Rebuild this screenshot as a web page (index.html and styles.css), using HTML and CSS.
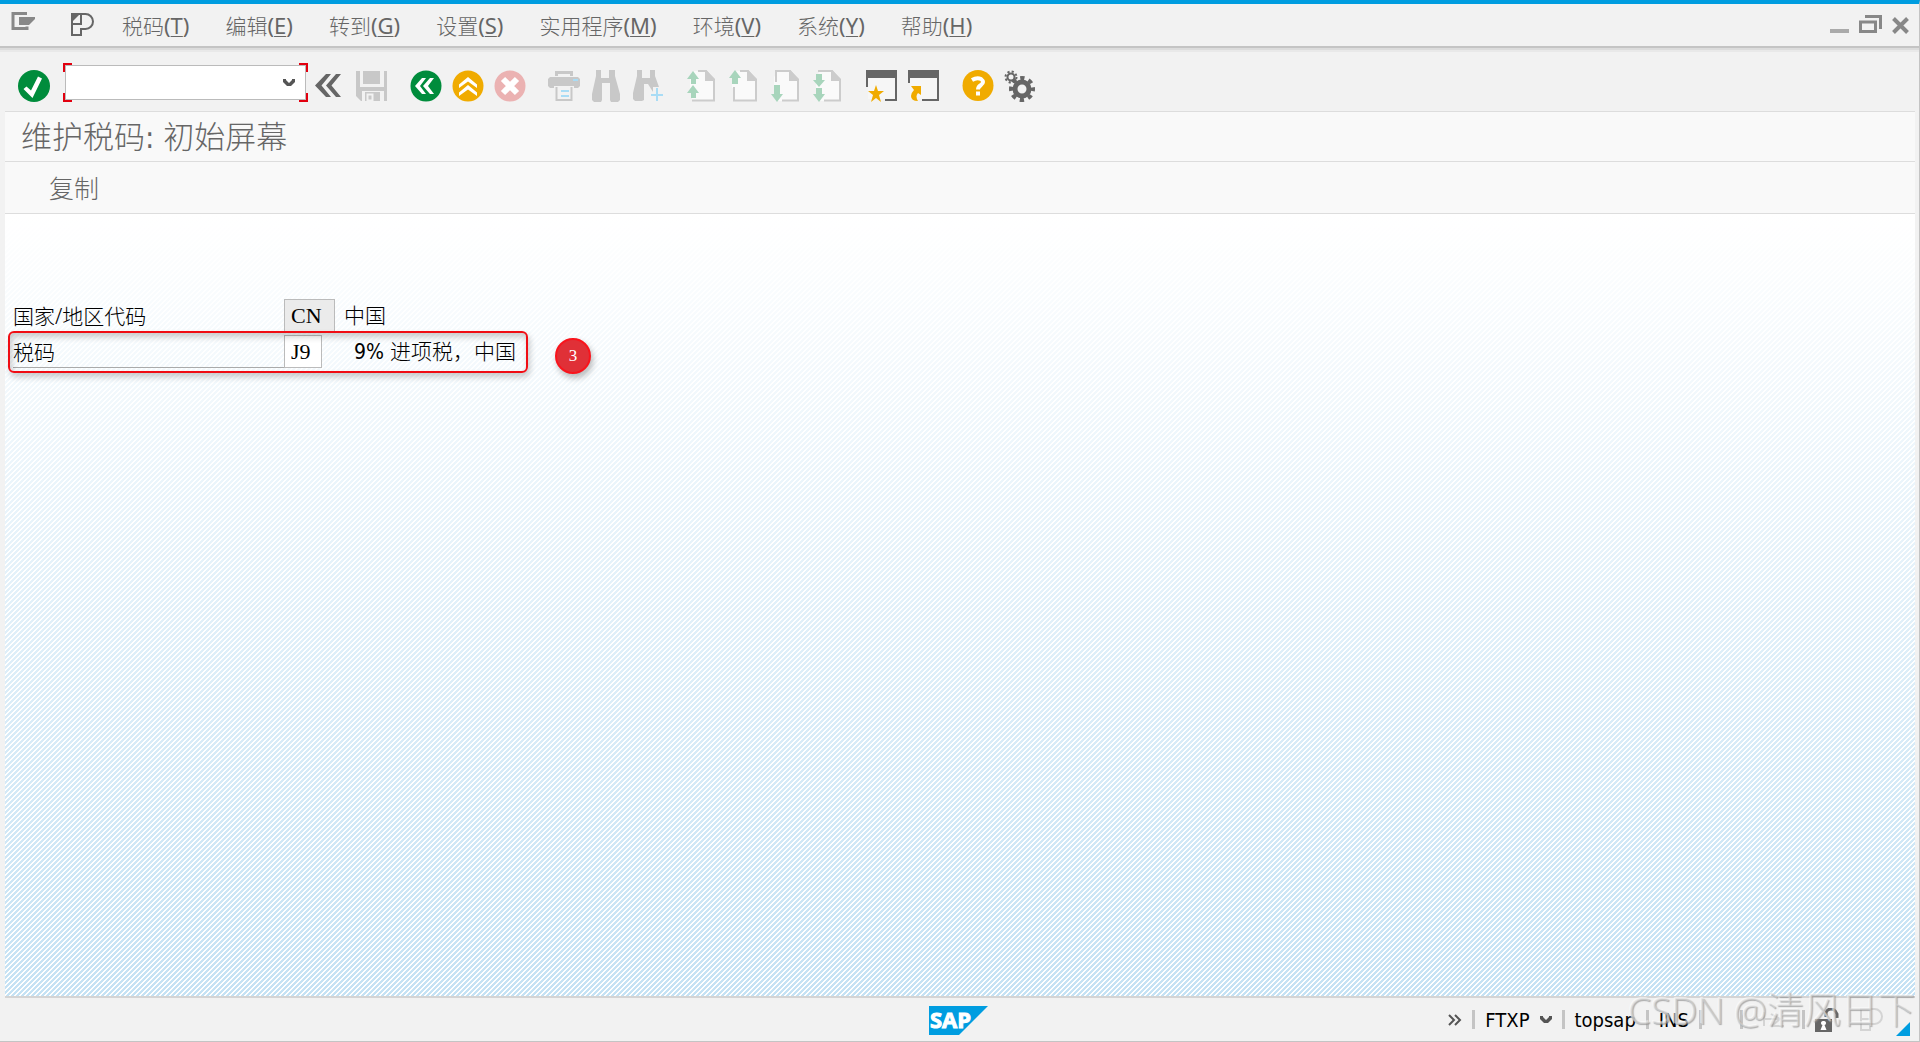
FILE: index.html
```html
<!DOCTYPE html>
<html lang="zh-CN">
<head>
<meta charset="utf-8">
<title>维护税码: 初始屏幕</title>
<link rel="stylesheet" href="styles.css">
</head>
<body>
<svg class="defs" aria-hidden="true">
  <symbol id="chevron" viewBox="0 0 12 8"><path d="M0 0h3v1l3 3 3-3V0h3v3L8 7H4L0 3z" fill="currentColor"/></symbol>
  <symbol id="page" viewBox="0 0 32 32"><path d="M8 1h12l9 9v21H6V18H4V7z" fill="#fafafa"/><path d="M19 0h1l9 9v2H19z" fill="#ccc"/></symbol>
</svg>
<div class="window">
  <header class="menubar">
    <button class="plain" aria-label="窗口菜单"><svg width="24" height="18"><path d="M16 1.5H2v15h14v-2M2 1v16" fill="none" stroke="#888" stroke-width="3"/><path d="M8 5h16v2l-6 6H8z" fill="#888"/></svg></button>
    <button class="plain brand" aria-label="P"><svg width="24" height="24"><path d="M1 1h13.500a7.500 7.500 0 0 1 0 15H10v6H1zM1 11h9V1" fill="none" stroke="#666" stroke-width="2"/><path d="M1 1h7v1L2 8H1z" fill="#666"/></svg></button>
    <nav class="menu">
      <button>税码<span>(<u>T</u>)</span></button><button>编辑<span>(<u>E</u>)</span></button><button>转到<span>(<u>G</u>)</span></button><button>设置<span>(<u>S</u>)</span></button><button>实用程序<span>(<u>M</u>)</span></button><button>环境<span>(<u>V</u>)</span></button><button>系统<span>(<u>Y</u>)</span></button><button>帮助<span>(<u>H</u>)</span></button>
    </nav>
    <div class="controls">
      <button class="plain" aria-label="最小化"><svg width="20" height="20"><path d="M0 14h19v4H0z" fill="#aaa"/></svg></button>
      <button class="plain" aria-label="还原"><svg width="24" height="20"><path d="M6 1.500h15.500V14M1.500 7h15v9.500h-15z" fill="none" stroke="#888" stroke-width="3"/></svg></button>
      <button class="plain" aria-label="关闭"><svg width="17" height="20"><path d="M1.500 3.500l14 14M15.500 3.500l-14 14" stroke="#888" stroke-width="4"/></svg></button>
    </div>
  </header>
  <div class="toolbar">
    <button class="plain" aria-label="确认"><svg width="32" height="32"><circle cx="16" cy="16" r="16" fill="#008c3c"/><path d="M5.500 19l3-2.500 4.500 4L20 6.500l4 2L14.500 28z" fill="#fff"/></svg></button>
    <div class="command">
      <input type="text" aria-label="命令">
      <button class="plain drop" aria-label="历史记录"><svg width="12" height="8"><use href="#chevron"/></svg></button>
      <svg class="corners" width="245" height="39"><path d="M1 9V1h8M236 1h8v8M1 30v8h8M236 38h8v-8" fill="none" stroke="#e2000f" stroke-width="2"/></svg>
    </div>
    <button class="plain collapse" aria-label="收起"><svg width="26" height="32"><path d="M11 4h5L6.500 15.500 16 27h-5L0 15.500zM21 4h5l-9.500 11.500L26 27h-5L11 15.500z" fill="#666"/></svg></button>
    <button class="plain save" aria-label="保存"><svg width="32" height="32"><path d="M0 1h4v16h24V1h3v30H28V21H6v10h-1L0 26z" fill="#c8c8c8"/><path d="M7 1h17v13H7zM9 22h15v9H9z" fill="#c8c8c8"/><path d="M11.500 24.500h5v6h-5z" fill="none" stroke="#f2f2f2" stroke-width="2"/></svg></button>
    <div class="tools">
      <div class="group">
        <button class="plain" aria-label="返回"><svg width="32" height="32"><circle cx="16" cy="16" r="15.500" fill="#008c3c"/><path d="M12 8h4l-6 8 6 8h-4L5 16zM20 8h4l-6 8 6 8h-4l-7-8z" fill="#fff"/></svg></button>
        <button class="plain" aria-label="退出"><svg width="32" height="32"><circle cx="16" cy="16" r="15.500" fill="#f0ab00"/><path d="M7 14.500L16 7l9 7.500v3.500l-9-6.500L7 18zM7 22.500l9-7.500 9 7.500V26l-9-6.500L7 26z" fill="#fff"/></svg></button>
        <button class="plain" aria-label="取消"><svg width="32" height="32"><circle cx="16" cy="16" r="15.500" fill="#ebb2b2"/><path d="M9 9l14 14M23 9L9 23" stroke="#fff" stroke-width="6"/></svg></button>
      </div>
      <div class="group">
        <button class="plain" aria-label="打印"><svg width="32" height="32"><path d="M7 1h18v5h-3V4H10v2H7zM2 7h28l2 2v7l-2 2h-4v-2H6v2H2l-2-2V9z" fill="#c8c8c8"/><path d="M8.500 17v13h15V17" fill="none" stroke="#c8c8c8" stroke-width="2"/><path d="M25 9h5v2h-5zM13 20h8v2h-8zM13 25h8v2h-8z" fill="#a9dcf5"/></svg></button>
        <button class="plain" aria-label="查找"><svg width="32" height="32"><path d="M6 0h5v8h8V0h6v6l5 18v6l-2 2h-7l-1-2V13h-8v17l-1 2H4l-2-2v-6L6 6z" fill="#c8c8c8"/></svg></button>
        <button class="plain" aria-label="查找下一个"><svg width="32" height="32"><path d="M5 0h5v8h8V0h5v6l4 11h-6v5l-5-8h-4v16l-2 1H3l-2-2v-6L5 6z" fill="#c8c8c8"/><path d="M25 18v13M19 25h12" stroke="#a9dcf5" stroke-width="2"/></svg></button>
      </div>
      <div class="group">
        <button class="plain" aria-label="首页"><svg width="32" height="32"><use href="#page"/><path d="M12 1h8l8 9v20.500H6" fill="none" stroke="#ccc" stroke-width="2"/><path d="M7 1l6 8h-3v5H5V9H1zM7 15l6 8h-3v5H5v-5H1z" fill="#a8d5bc"/></svg></button>
        <button class="plain" aria-label="上一页"><svg width="32" height="32"><use href="#page"/><path d="M12 1h8l8 9v20.500H6V17" fill="none" stroke="#ccc" stroke-width="2"/><path d="M7 0l6 8h-3v6H4V8H1z" fill="#a8d5bc"/></svg></button>
        <button class="plain" aria-label="下一页"><svg width="32" height="32"><use href="#page"/><path d="M6 12V1h14l8 9v20.500H12" fill="none" stroke="#ccc" stroke-width="2"/><path d="M7 32l6-8h-3v-9H4v9H1z" fill="#a8d5bc"/></svg></button>
        <button class="plain" aria-label="末页"><svg width="32" height="32"><use href="#page"/><path d="M6 1h14l8 9v20.500H12" fill="none" stroke="#ccc" stroke-width="2"/><path d="M7 17l6-7h-3V4H4v6H1zM7 32l6-8h-3v-6H4v6H1z" fill="#a8d5bc"/></svg></button>
      </div>
      <div class="group">
        <button class="plain" aria-label="创建新会话"><svg width="32" height="32"><path d="M0 0h31v31H19v-2h10V8H2v9H0z" fill="#666"/><path d="M2 8h27v21H2z" fill="#f6f6f6"/><path d="M10 15l2 6h6l-5 4 2 7-5-4-5 4 2-7-5-4h6z" fill="#f0ab00"/></svg></button>
        <button class="plain" aria-label="生成快捷方式"><svg width="32" height="32"><path d="M0 0h31v31H14v-2h15V8H2v5H0z" fill="#666"/><path d="M2 8h27v21H2z" fill="#f6f6f6"/><path d="M3 16h10v9l-3-2q-3 3 0 8Q3 31 3 26q0-3 3-6z" fill="#f0ab00"/></svg></button>
      </div>
      <div class="group">
        <button class="plain" aria-label="帮助"><svg width="32" height="32"><circle cx="16" cy="15.500" r="15.500" fill="#f0ab00"/><path d="M10 10q5-3 9-1 4 3 0 6-3 2-3 4.500M16 21.500v4" fill="none" stroke="#fff" stroke-width="4"/></svg></button>
        <button class="plain" aria-label="定制本地布局"><svg width="32" height="32" fill="none" stroke="#666"><circle cx="18" cy="19" r="7" stroke-width="5"/><circle cx="18" cy="19" r="11" stroke-width="4" stroke-dasharray="4.320 4.320" stroke-dashoffset="2.160"/><circle cx="7" cy="7" r="3.500" stroke-width="2"/><circle cx="7" cy="7" r="5.500" stroke-width="2" stroke-dasharray="2.160 2.160"/></svg></button>
      </div>
    </div>
  </div>
  <h1 class="title">维护税码<span>: </span>初始屏幕</h1>
  <div class="actions"><button>复制</button></div>
  <main class="canvas">
    <form class="fields">
      <div class="row">
        <label for="country">国家/地区代码</label>
        <input id="country" class="country" value="CN" readonly>
        <span class="desc">中国</span>
      </div>
      <div class="row">
        <label class="ruled" for="tax">税码</label>
        <input id="tax" class="tax" value="J9">
        <span class="desc rate">9% 进项税，中国</span>
      </div>
      <div class="highlight"></div>
      <div class="step">3</div>
    </form>
  </main>
  <footer class="status">
    <svg class="logo" width="59" height="29" viewBox="0 0 59 29" role="img" aria-label="SAP"><path d="M0 0h59L30 29H0z" fill="#009de0"/><text x="1" y="22" class="logotext">SAP</text></svg>
    <div class="info">
      <svg width="14" height="12"><path d="M1 1l5 5-5 5M7 1l5 5-5 5" fill="none" stroke="#555" stroke-width="2"/></svg>
      <i class="sep"></i>
      <span>FTXP</span>
      <svg class="more" width="12" height="8"><use href="#chevron"/></svg>
      <i class="sep more-gap"></i><span>topsap</span><i class="sep"></i><span>INS</span><i class="sep"></i>
      <i class="sep wide"></i>
      <svg class="pen" width="22" height="20"><path d="M1 2v14M1 9h16M8 4l9 5-8 7M9 16h12" fill="none" stroke="#d4d4d4" stroke-width="2"/></svg>
      <i class="sep far"></i>
      <svg width="24" height="24"><path d="M0 11h17v13H0z" fill="#666"/><path d="M11 9V5q1-4 5-4t6 5v4" fill="none" stroke="#666" stroke-width="3"/><path d="M8.500 13a2 2 0 0 1 1 4l2 5h-6l2-5a2 2 0 0 1 1-4" fill="#fff"/></svg>
      <svg class="ghost" width="24" height="24"><path d="M1 1h13.500a7.500 7.500 0 0 1 0 15H10v6H1zM1 11h9V1" fill="none" stroke="#d4d4d4" stroke-width="2"/></svg>
    </div>
    <div class="watermark">CSDN @清风日下</div>
    <svg class="grip" width="14" height="14"><path d="M14 0v14H0z" fill="#009de0"/></svg>
  </footer>
</div>
</body>
</html>
```
FILE: styles.css
```css
* { box-sizing: border-box; }
body { margin: 0; font-family: "Noto Sans", "Noto Sans CJK SC", sans-serif; font-size: 20px; color: #666; }
button, input { font: inherit; color: inherit; }
button { margin: 0; padding: 0; border: 0; background: none; font-weight: 300; }
svg { display: block; flex: none; }
.defs { position: absolute; width: 0; height: 0; }
.plain { flex: none; }

.window { display: flex; flex-direction: column; min-height: 100vh; padding: 0 4px 0 5px; border-top: 4px solid #009de0; border-right: 1px solid #c4c4c4; border-bottom: 1px solid #c4c4c4; background: #f2f2f2; }

.menubar { display: flex; height: 44px; margin: 0 -4px 0 -5px; padding: 8px 10px 0 11px; align-items: flex-start; border-bottom: 2px solid #c4c4c4; box-shadow: 0 2px #dcdcdc, 0 4px #e9e9e9; }
.brand { margin: 1px 0 0 36px; }
.menu { display: flex; gap: 36px; margin: -2px 0 0 27px; }
.menu button { font-size: 21px; line-height: 30px; white-space: nowrap; }
.menu span { font-size: 22px; font-weight: 400; }
.menu u { text-decoration-thickness: 1px; text-underline-offset: 2px; }
.controls { display: flex; gap: 9px; margin: 3px 0 0 auto; }

.toolbar { display: flex; height: 64px; padding: 15px 0 0 13px; align-items: flex-start; border-bottom: 1px solid #ddd; }
.toolbar > .plain, .tools { margin-top: 7px; }
.command { position: relative; display: flex; width: 245px; height: 39px; margin-left: 13px; padding: 2px; }
.command input { width: 100%; padding: 0 32px 0 8px; border: 1px solid #bbb; background: #fff; }
.drop { position: absolute; right: 13px; top: 16px; color: #555; }
.corners { position: absolute; inset: 0; pointer-events: none; }
.collapse { margin-left: 7px; }
.save { margin-left: 15px; }
.tools { display: flex; gap: 22px; margin-left: 22px; }
.group { display: flex; gap: 10px; }

.title { margin: 0; height: 50px; padding-left: 16px; border-bottom: 1px solid #ddd; background: #f9f9f9; font-size: 31px; font-weight: 300; line-height: 48px; }
.title span { font-family: "DejaVu Sans Condensed", sans-serif; font-weight: 400; }
.actions { height: 52px; padding-left: 44px; border-bottom: 1px solid #ddd; background: #f9f9f9; font-size: 25px; }
.actions button { line-height: 52px; }

.canvas { flex: 1; padding: 85px 0 0 8px; color: #000;
  background: linear-gradient(to bottom, #fff 0%, #ffffff00 100%), url("data:image/svg+xml,%3Csvg xmlns='http://www.w3.org/2000/svg' width='5' height='5' shape-rendering='crispEdges'%3E%3Cpath fill='%23fff' d='M0 0h5v5H0z'/%3E%3Cpath fill='%23c5e2f4' d='M2 0h3v1H2zM1 1h3v1H1zM0 2h3v1H0zM0 3h2v1H0zM4 3h1v1H4zM0 4h1v1H0zM3 4h2v1H3z'/%3E%3C/svg%3E") 0 0 / 5px 5px; }
.fields { position: relative; display: flex; flex-direction: column; gap: 3px; }
.row { display: flex; height: 33px; }
.row label { width: 271px; font-size: 21px; font-weight: 300; line-height: 34px; }
.ruled { border-bottom: 1px solid #aaa; }
.row input { padding: 0 0 0 6px; border: 1px solid #bbb; font-family: "Liberation Serif", serif; font-size: 22px; }
.row .country { width: 51px; background: #ebebeb; }
.row .tax { width: 38px; background: #fff; }
.desc { padding-left: 9px; font-family: "DejaVu Sans Condensed", "Noto Sans CJK SC", sans-serif; font-size: 21px; font-weight: 300; line-height: 34px; white-space: nowrap; }
.rate { padding-left: 32px; }
.highlight { position: absolute; left: -5px; top: 32px; width: 520px; height: 42px; border: 2px solid #f00d14; border-radius: 6px; box-shadow: 2px 4px 6px #0003, inset 2px 4px 6px #0003; pointer-events: none; }
.step { position: absolute; left: 542px; top: 39px; width: 36px; height: 36px; border: 2px solid #f9141c; border-radius: 50%; background: #e03037; box-shadow: 2px 4px 6px #0004; color: #fff; font: 17px/32px "Liberation Serif", serif; text-align: center; }

.status { position: relative; display: flex; height: 45px; align-items: center; border-top: 2px solid #d4d4d4; color: #000; font-family: "DejaVu Sans Condensed", sans-serif; }
.logo { margin: 2px auto 0; position: absolute; left: 0; right: 3px; }
.logotext { font: bold 22px "Open Sans", sans-serif; fill: #fff; stroke: #fff; }
.info { display: flex; align-items: center; gap: 10px; margin: 0 31px 0 auto; }
.sep { width: 3px; height: 19px; background: #c4c4c4; }
.more { color: #555; }
.wide { margin-left: 28px; }
.pen { margin-left: 10px; }
.far { margin-left: 7px; }
.ghost { margin-left: 11px; }
.watermark { position: absolute; right: 0; bottom: 6px; font-family: "Noto Sans", "Noto Sans CJK SC", sans-serif; font-size: 37px; font-weight: 300; line-height: 50px; color: #dcdcdc88; text-shadow: 1px 1px 1px #888a, -1px -1px #fff8; white-space: nowrap; }
.grip { position: absolute; right: 5px; bottom: 5px; }
```
